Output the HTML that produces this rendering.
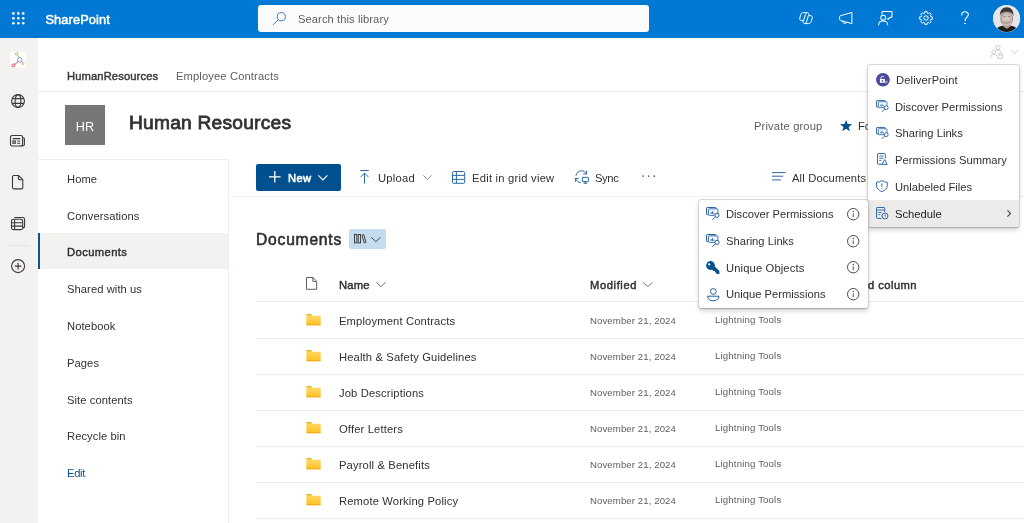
<!DOCTYPE html>
<html lang="en">
<head>
<meta charset="utf-8">
<title>Human Resources - Documents</title>
<style>
*{box-sizing:border-box;margin:0;padding:0}
html,body{width:1024px;height:523px;overflow:hidden;background:#fff}
body{font-family:"Liberation Sans",sans-serif;font-size:11.2px;color:#323130;position:relative}
.abs{position:absolute}
.t{position:absolute;white-space:nowrap;line-height:16px;height:16px;will-change:transform}
.sb{font-weight:400;-webkit-text-stroke:.04em currentColor;letter-spacing:.12px}
svg{position:absolute;overflow:visible}
#top{left:0;top:0;width:1024px;height:37.8px;background:#0078d4}
#rail{left:0;top:37.8px;width:38.3px;height:486px;background:#f3f2f1}
#search{left:257.5px;top:5.1px;width:391.2px;height:26.5px;background:#fbfbfc;border-radius:3px}
#nav{left:38px;top:159px;width:190.5px;height:365px;border-top:1px solid #f0efee;border-right:1px solid #f0efee;background:#fff}
.nv{left:67px;color:#323130;letter-spacing:.07px}
.hl{position:absolute;background:#eeedec;height:1px}
.menu{position:absolute;background:#fff;border-radius:2px;box-shadow:0 0 0 .7px rgba(0,0,0,.15),0 2.4px 5.5px rgba(0,0,0,.17),0 .5px 1.5px rgba(0,0,0,.15)}
.row{left:339px;letter-spacing:.15px}
.dt{left:590px;font-size:9.6px;color:#605e5c;letter-spacing:.1px}
.lt{left:715px;font-size:9.6px;color:#605e5c;letter-spacing:.17px}
</style>
</head>
<body>
<!-- top bar -->
<div id="top" class="abs"></div>
<svg style="left:11.6px;top:11.5px" width="12.6" height="12.6" viewBox="0.1 0.1 13.6 13.6" fill="#fff"><circle cx="1.6" cy="1.6" r="1.4"/><circle cx="6.9" cy="1.6" r="1.4"/><circle cx="12.2" cy="1.6" r="1.4"/><circle cx="1.6" cy="6.9" r="1.4"/><circle cx="6.9" cy="6.9" r="1.4"/><circle cx="12.2" cy="6.9" r="1.4"/><circle cx="1.6" cy="12.2" r="1.4"/><circle cx="6.9" cy="12.2" r="1.4"/><circle cx="12.2" cy="12.2" r="1.4"/></svg>
<div class="t sb" style="left:45px;top:11px;transform:translate(.4px,.5px);font-size:12.8px;color:#fff">SharePoint</div>
<div id="search" class="abs"></div>
<svg style="left:272px;top:11px" width="15" height="15" viewBox="0 0 15 15" fill="none" stroke="#2f6db3" stroke-width=".9"><circle cx="9.3" cy="5.7" r="4.1"/><path d="M6.4 8.6 L0.9 14"/></svg>
<div class="t" style="left:298px;top:11px;color:#605e5c;letter-spacing:.07px">Search this library</div>


<!-- top right icons -->
<svg style="left:798.6px;top:12.2px" width="14" height="12.2" viewBox="0 0 14 12.2" fill="none" stroke="#fff" stroke-width="1" stroke-linejoin="round"><path d="M5 .6 H8.2 C9.2 .6 9.6 1.2 9.9 2.2 L10.3 3.6 H11.4 C13 3.6 13.6 4.8 13.2 6.2 L12.2 9.6 C11.8 10.9 11 11.6 9.8 11.6 H5.8 C4.8 11.6 4.4 11 4.1 10 L3.7 8.6 H2.6 C1 8.6 .4 7.4 .8 6 L1.8 2.6 C2.2 1.3 3 .6 5 .6 Z"/><path d="M8 .8 C7 1 6.6 1.8 6.3 2.8 L4.6 8.6 H3.7 M6 11.4 C7 11.2 7.4 10.4 7.7 9.4 L9.4 3.6 H10.3"/></svg>
<svg style="left:838.8px;top:11.8px" width="14" height="12.4" viewBox="0 0 14 12.4" fill="none" stroke="#fff" stroke-width="1" stroke-linejoin="round" stroke-linecap="round"><path d="M12.9 .8 V11.6 L1.8 8.6 C1 8.4 .6 7.9 .6 7.1 V5.1 C.6 4.3 1 3.8 1.8 3.6 Z"/><path d="M3.8 9.2 C3.8 10.6 4.6 11.4 5.8 11.4 C7 11.4 7.6 10.8 7.8 10.4"/></svg>
<svg style="left:878.4px;top:10.8px" width="14.6" height="14.4" viewBox="0 0 14.6 14.4" fill="none" stroke="#fff" stroke-width="1.05" stroke-linejoin="round" stroke-linecap="round"><path d="M4 3 V1.3 C4 .8 4.3 .6 4.8 .6 H13.2 C13.7 .6 14 .9 14 1.4 V5.6 C14 6.1 13.7 6.4 13.2 6.4 H12 L10 8.4 V7.2"/><circle cx="5.2" cy="6.7" r="2.4"/><path d="M.7 13.8 C.7 11.4 2.6 10 5.2 10 C7.8 10 9.7 11.4 9.7 13.8"/></svg>
<svg style="left:918.7px;top:11.3px" width="14" height="14" viewBox="0 0 14 14" fill="none" stroke="#fff" stroke-width="1" stroke-linejoin="round"><circle cx="7" cy="7" r="2.2"/><path d="M5.71 2.17 L5.90 0.59 L8.10 0.59 L8.29 2.17 L9.51 2.67 L10.75 1.69 L12.31 3.25 L11.33 4.49 L11.83 5.71 L13.41 5.90 L13.41 8.10 L11.83 8.29 L11.33 9.51 L12.31 10.75 L10.75 12.31 L9.51 11.33 L8.29 11.83 L8.10 13.41 L5.90 13.41 L5.71 11.83 L4.49 11.33 L3.25 12.31 L1.69 10.75 L2.67 9.51 L2.17 8.29 L0.59 8.10 L0.59 5.90 L2.17 5.71 L2.67 4.49 L1.69 3.25 L3.25 1.69 L4.49 2.67 Z"/></svg>
<svg style="left:961.4px;top:11.4px" width="8" height="14" viewBox="0 0 8 14" fill="none" stroke="#fff" stroke-width="1.1" stroke-linecap="round"><path d="M.7 4 C.7 1.8 2.2 .7 4 .7 C5.8 .7 7.3 1.8 7.3 3.8 C7.3 6.4 4 6.6 4 9.8"/><circle cx="4" cy="12.6" r=".5" fill="#fff" stroke-width=".6"/></svg>
<!-- avatar -->
<svg style="left:992.6px;top:4.6px" width="27.2" height="27.2" viewBox="0 0 27.2 27.2"><defs><clipPath id="av"><circle cx="13.6" cy="13.6" r="13.4"/></clipPath><filter id="bl" x="-20%" y="-20%" width="140%" height="140%"><feGaussianBlur stdDeviation=".55"/></filter></defs><circle cx="13.6" cy="13.6" r="13.6" fill="#d9ecfa"/><g clip-path="url(#av)"><rect width="27.2" height="27.2" fill="#e6e6ea"/><g filter="url(#bl)"><path d="M1.5 27.2 C2.5 23 6 21.6 9.6 20.8 L13.8 23.4 L18 20.8 C21.6 21.6 25 23 26 27.2 Z" fill="#1b1b1f"/><path d="M10 18 H17.6 V21.2 L13.8 23.8 L10 21.2 Z" fill="#a89890"/><ellipse cx="13.7" cy="13.4" rx="6.5" ry="8" fill="#a89790"/><ellipse cx="13.8" cy="14.4" rx="5.3" ry="6.8" fill="#c9b9b1"/><ellipse cx="13" cy="13" rx="3.6" ry="3" fill="#d6cac3"/><path d="M10.4 11.6 H12.6 M14.8 11.6 H17" stroke="#6b5d58" stroke-width=".7"/><path d="M7 11.4 C6.4 5 9.8 2.2 13.8 2.2 C17.8 2.2 21 5 20.4 11.4 C19.8 8.4 18.6 6.8 13.8 6.8 C9 6.8 7.6 8.4 7 11.4 Z" fill="#3a3838"/><path d="M9.6 16.6 C11 18.6 16 18.6 17.4 16.6" stroke="#8a7a74" stroke-width=".8" fill="none"/></g></g></svg>
<!-- people lock + chevron -->
<svg style="left:990px;top:44.8px" width="13.4" height="14" viewBox="0 0 13.4 14" fill="none" stroke="#c8c6c4" stroke-width=".9"><circle cx="8" cy="2.6" r="2.1"/><circle cx="3.8" cy="7" r="2"/><path d="M.5 13 C.5 10.6 1.8 9.6 3.8 9.6 C5.4 9.6 6.4 10.2 6.8 11.2 M5.6 5.6 C6.2 5.2 7 5 8 5 C9.8 5 10.8 6 11 7.4"/><rect x="8" y="9.8" width="4.8" height="3.7" rx=".5"/><path d="M9.2 9.8 V8.8 A1.2 1.2 0 0 1 11.6 8.8 V9.8"/></svg>
<svg style="left:1011px;top:50px" width="7.4" height="4.2" viewBox="0 0 7.4 4.2" fill="none" stroke="#c8c6c4" stroke-width=".9"><path d="M.3 .3 L3.7 3.7 L7.1 .3"/></svg>

<!-- rail -->
<div id="rail" class="abs"></div>
<!-- logo -->
<div class="abs" style="left:9.6px;top:52px;width:16.4px;height:16.4px;background:#fdfdfc"></div>
<svg style="left:9.6px;top:52px" width="16.4" height="16.4" viewBox="0 0 16.4 16.4" fill="none" stroke-width="0.9"><path d="M4.6 12.6 L8 9.6" stroke="#d8315b"/><path d="M7.6 3.2 L9.4 6.2" stroke="#9bc46a"/><circle cx="3.4" cy="13.4" r="1.5" stroke="#d8315b"/><circle cx="9.8" cy="7.8" r="2.3" stroke="#7b8fd6"/><ellipse cx="6.6" cy="1.9" rx="1.5" ry="1.1" stroke="#9bc46a"/><circle cx="13" cy="11.6" r="1" stroke="#e0b84a"/><path d="M11.4 9.6 L12.4 10.8" stroke="#7b8fd6"/></svg>
<!-- globe -->
<svg style="left:11px;top:93.8px" width="14" height="14" viewBox="0 0 14 14" fill="none" stroke="#3b3a39" stroke-width="1.1"><circle cx="7" cy="7" r="6.4"/><ellipse cx="7" cy="7" rx="2.9" ry="6.4"/><path d="M1.3 4.6 H12.7 M1.3 9.4 H12.7"/></svg>
<!-- news -->
<svg style="left:10.4px;top:135.4px" width="15" height="11.6" viewBox="0 0 15 11.6" fill="none" stroke="#3b3a39" stroke-width="1.1"><path d="M2.2 .5 H11 A1.6 1.6 0 0 1 12.6 2.1 V9.2 A1.8 1.8 0 0 1 10.8 11 H2.2 A1.7 1.7 0 0 1 .5 9.3 V2.2 A1.7 1.7 0 0 1 2.2 .5 Z"/><path d="M12.6 2.8 H13.2 A1.2 1.2 0 0 1 14.4 4 V9.2 A1.8 1.8 0 0 1 12.6 11 H10.6"/><path d="M2.8 3.6 H10.2 M7.2 6 H10.2 M7.2 8.2 H10.2"/><rect x="2.9" y="5.9" width="2.4" height="2.4"/></svg>
<!-- doc -->
<svg style="left:12.4px;top:175.4px" width="11.4" height="14.4" viewBox="0 0 11.4 14.4" fill="none" stroke="#3b3a39" stroke-width="1.1"><path d="M2 .5 H6.6 L10.8 4.7 V12.4 A1.5 1.5 0 0 1 9.3 13.9 H2 A1.5 1.5 0 0 1 .5 12.4 V2 A1.5 1.5 0 0 1 2 .5 Z"/><path d="M6.4 .7 V3.6 A1.2 1.2 0 0 0 7.6 4.8 H10.6"/></svg>
<!-- list -->
<svg style="left:10.9px;top:217.2px" width="14.2" height="13.2" viewBox="0 0 14.2 13.2" fill="none" stroke="#3b3a39" stroke-width="1.1"><path d="M3.4 .5 H11.6 A2 2 0 0 1 13.6 2.5 V9 A2 2 0 0 1 11.6 11 "/><rect x=".5" y="2.2" width="11.2" height="10.4" rx="1.8"/><path d="M.6 5.7 H11.6 M.6 9.1 H11.6 M3.6 2.4 V12.4"/></svg>
<div class="abs" style="left:8px;top:245.4px;width:22px;height:1px;background:#e6e4e2"></div>
<!-- plus -->
<svg style="left:11.2px;top:258.9px" width="14.2" height="14.2" viewBox="0 0 14.2 14.2" fill="none" stroke="#3b3a39" stroke-width="1.1"><circle cx="7.1" cy="7.1" r="6.5"/><path d="M7.1 3.8 V10.4 M3.8 7.1 H10.4"/></svg>

<!-- breadcrumb -->
<div class="t sb" style="left:67px;top:67.5px;color:#3b3a39">HumanResources</div>
<div class="t" style="left:175.5px;top:67.5px;color:#605e5c;letter-spacing:.12px">Employee Contracts</div>
<div class="hl" style="left:38px;top:91px;width:986px"></div>

<!-- site header -->
<div class="abs" style="left:65px;top:105.2px;width:40px;height:39.8px;background:#777"></div>
<div class="t" style="left:65px;top:118px;width:40px;text-align:center;color:#fff;font-size:12.7px;transform:translateY(.9px)">HR</div>
<div class="t sb" style="left:129.2px;top:111px;font-size:19.2px;line-height:24px;height:24px;letter-spacing:.22px;transform:translateY(.35px)">Human Resources</div>
<div class="t" style="left:754px;top:117.6px;color:#605e5c;letter-spacing:.15px">Private group</div>
<div class="t" style="left:858px;top:117.6px">Fo</div>

<!-- nav -->
<div id="nav" class="abs"></div>
<div class="abs" style="left:38px;top:233.3px;width:190px;height:36.2px;background:#f3f2f1"></div>
<div class="abs" style="left:38px;top:233.3px;width:2px;height:36.2px;background:#0f548c"></div>
<div class="t nv" style="top:170.8px">Home</div>
<div class="t nv" style="top:207.6px">Conversations</div>
<div class="t nv sb" style="top:244.4px;letter-spacing:.42px">Documents</div>
<div class="t nv" style="top:281.2px">Shared with us</div>
<div class="t nv" style="top:318px">Notebook</div>
<div class="t nv" style="top:354.8px">Pages</div>
<div class="t nv" style="top:391.6px">Site contents</div>
<div class="t nv" style="top:428.4px">Recycle bin</div>
<div class="t nv" style="top:464.8px;color:#0f548c;letter-spacing:-.3px">Edit</div>

<!-- command bar -->
<div class="abs" style="left:255.5px;top:164px;width:85.6px;height:26.6px;background:#00508f;border-radius:2px"></div>
<div class="t sb" style="left:287.8px;top:170px;color:#fff;letter-spacing:.3px;-webkit-text-stroke:.05em #fff">New</div>
<div class="t" style="left:378px;top:170px;letter-spacing:.25px">Upload</div>
<div class="t" style="left:472px;top:170px;letter-spacing:.24px">Edit in grid view</div>
<div class="t" style="left:594.5px;top:170px;letter-spacing:-.35px">Sync</div>
<div class="t" style="left:792px;top:170px;letter-spacing:.16px">All Documents</div>
<div class="hl" style="left:230px;top:195.5px;width:794px;background:#f0efee"></div>


<!-- command icons -->
<svg style="left:268.8px;top:171.2px" width="11.6" height="11.6" viewBox="0 0 11.6 11.6" fill="none" stroke="#fff" stroke-width="1.3"><path d="M5.8 0 V11.6 M0 5.8 H11.6"/></svg>
<svg style="left:318.4px;top:174.6px" width="9.8" height="5.6" viewBox="0 0 9.8 5.6" fill="none" stroke="#fff" stroke-width="1.2"><path d="M.4 .4 L4.9 4.9 L9.4 .4"/></svg>
<svg style="left:359.6px;top:169.8px" width="9" height="13.6" viewBox="0 0 9 13.6" fill="none" stroke="#2b68a6" stroke-width="1"><path d="M.2 .5 H8.8 M4.5 13.6 V3.2 M.6 7 L4.5 3.1 L8.4 7"/></svg>
<svg style="left:422.8px;top:175px" width="9" height="5" viewBox="0 0 9 5" fill="none" stroke="#8a8886" stroke-width=".9"><path d="M.3 .3 L4.5 4.5 L8.7 .3"/></svg>
<svg style="left:452.2px;top:170.6px" width="13.2" height="12.8" viewBox="0 0 13.2 12.8" fill="none" stroke="#2b68a6" stroke-width="1"><rect x=".5" y=".5" width="12.2" height="11.8" rx="1.2"/><path d="M.5 4.4 H12.7 M.5 8.4 H12.7 M4.4 .5 V12.3"/></svg>
<svg style="left:574px;top:170.4px" width="15" height="13.8" viewBox="0 0 15 13.8" fill="none" stroke="#2b68a6" stroke-width="1" stroke-linecap="round" stroke-linejoin="round"><path d="M2 5.4 C2.6 2.6 4.8 .8 7.4 .8 C9.6 .8 11.4 2 12.4 3.8 M12.6 1 V4 H9.6"/><path d="M6.4 12.6 C4 12.2 2.2 10.6 1.6 8.6 M1.4 11.4 V8.4 H4.4"/><rect x="8.4" y="7.4" width="6" height="4.2" rx=".6"/><path d="M10 13.2 H12.8 M11.4 11.6 V13.2"/></svg>
<svg style="left:642px;top:175.4px" width="13.4" height="2.2" viewBox="0 0 13.4 2.2" fill="#605e5c"><circle cx="1.1" cy="1.1" r=".9"/><circle cx="6.7" cy="1.1" r=".9"/><circle cx="12.3" cy="1.1" r=".9"/></svg>
<svg style="left:771.8px;top:172.4px" width="13.6" height="8.6" viewBox="0 0 13.6 8.6" fill="none" stroke="#2b68a6" stroke-width="1"><path d="M0 .6 H13.6 M0 4.2 H11.2 M0 7.9 H8.8"/></svg>
<svg style="left:839.6px;top:119.8px" width="12.2" height="11.2" viewBox="0 0 12.2 11.2" fill="#03508f"><path d="M6.1 0 L7.7 4 L12.2 4.2 L8.7 6.9 L9.9 11.2 L6.1 8.7 L2.3 11.2 L3.5 6.9 L0 4.2 L4.5 4 Z"/></svg>

<!-- list title -->
<div class="t sb" style="left:256px;top:230.3px;font-size:15.6px;line-height:20px;height:20px;letter-spacing:.8px">Documents</div>
<div class="abs" style="left:349px;top:229px;width:37px;height:19.8px;background:#c5dcee;border-radius:2px"></div>

<svg style="left:354px;top:234.4px" width="12.4" height="9.4" viewBox="0 0 12.4 9.4" fill="none" stroke="#323130" stroke-width=".9"><rect x=".5" y=".5" width="2.3" height="8.4"/><rect x="4.2" y=".5" width="2.3" height="8.4"/><path d="M8 1.2 L9.8 .6 L12 8.2 L10.2 8.8 Z"/></svg>
<svg style="left:371px;top:236.6px" width="9.8" height="5.2" viewBox="0 0 9.8 5.2" fill="none" stroke="#323130" stroke-width=".9"><path d="M.3 .3 L4.9 4.7 L9.5 .3"/></svg>
<!-- header icons -->
<svg style="left:306.2px;top:277.3px" width="11.2" height="12.8" viewBox="0 0 11.2 12.8" fill="none" stroke="#605e5c" stroke-width="1"><path d="M.5 .5 H7 L10.7 4.2 V12.3 H.5 Z"/><path d="M6.8 .6 V4.4 H10.6"/></svg>
<svg style="left:376px;top:281.8px" width="9.8" height="5" viewBox="0 0 9.8 5" fill="none" stroke="#605e5c" stroke-width=".9"><path d="M.3 .3 L4.9 4.6 L9.5 .3"/></svg>
<svg style="left:643px;top:281.8px" width="9.8" height="5" viewBox="0 0 9.8 5" fill="none" stroke="#605e5c" stroke-width=".9"><path d="M.3 .3 L4.9 4.6 L9.5 .3"/></svg>
<svg width="0" height="0" style="left:0;top:0"><defs><linearGradient id="fg" x1="0" y1="0" x2="0" y2="1"><stop offset="0" stop-color="#ffd966"/><stop offset="1" stop-color="#ffc020"/></linearGradient><g id="fold"><path d="M.3 1 A.9 .9 0 0 1 1.2 .1 H5.2 L6.8 1.7 H.3 Z" fill="#e6b422"/><path d="M.3 1.7 H14.2 A.7 .7 0 0 1 14.9 2.4 V10.8 A.7 .7 0 0 1 14.2 11.5 H1 A.7 .7 0 0 1 .3 10.8 Z" fill="url(#fg)"/><path d="M.3 10.5 H14.9 V10.8 A.7 .7 0 0 1 14.2 11.5 H1 A.7 .7 0 0 1 .3 10.8 Z" fill="#eeac22"/></g></defs></svg>
<svg style="left:306.4px;top:314.3px" width="15" height="11.4" viewBox="0 0 15.2 11.6"><use href="#fold"/></svg>
<svg style="left:306.4px;top:350.3px" width="15" height="11.4" viewBox="0 0 15.2 11.6"><use href="#fold"/></svg>
<svg style="left:306.4px;top:386.3px" width="15" height="11.4" viewBox="0 0 15.2 11.6"><use href="#fold"/></svg>
<svg style="left:306.4px;top:422.3px" width="15" height="11.4" viewBox="0 0 15.2 11.6"><use href="#fold"/></svg>
<svg style="left:306.4px;top:458.3px" width="15" height="11.4" viewBox="0 0 15.2 11.6"><use href="#fold"/></svg>
<svg style="left:306.4px;top:494.3px" width="15" height="11.4" viewBox="0 0 15.2 11.6"><use href="#fold"/></svg>

<!-- table -->
<div class="t sb row" style="top:276.7px;letter-spacing:.25px">Name</div>
<div class="t sb" style="left:590px;top:276.7px;letter-spacing:.6px">Modified</div>
<div class="t sb" style="left:868px;top:276.7px;letter-spacing:.45px">d column</div>
<div class="hl" style="left:256px;top:301.3px;width:768px"></div>

<div class="t row" style="top:312.5px">Employment Contracts</div>
<div class="t dt" style="top:312.5px">November 21, 2024</div>
<div class="t lt" style="top:311.5px">Lightning Tools</div>
<div class="hl" style="left:256px;top:337.5px;width:768px"></div>

<div class="t row" style="top:348.5px">Health &amp; Safety Guidelines</div>
<div class="t dt" style="top:348.5px">November 21, 2024</div>
<div class="t lt" style="top:347.5px">Lightning Tools</div>
<div class="hl" style="left:256px;top:373.5px;width:768px"></div>

<div class="t row" style="top:384.5px">Job Descriptions</div>
<div class="t dt" style="top:384.5px">November 21, 2024</div>
<div class="t lt" style="top:383.5px">Lightning Tools</div>
<div class="hl" style="left:256px;top:409.5px;width:768px"></div>

<div class="t row" style="top:420.5px">Offer Letters</div>
<div class="t dt" style="top:420.5px">November 21, 2024</div>
<div class="t lt" style="top:419.5px">Lightning Tools</div>
<div class="hl" style="left:256px;top:445.5px;width:768px"></div>

<div class="t row" style="top:456.5px">Payroll &amp; Benefits</div>
<div class="t dt" style="top:456.5px">November 21, 2024</div>
<div class="t lt" style="top:455.5px">Lightning Tools</div>
<div class="hl" style="left:256px;top:481.5px;width:768px"></div>

<div class="t row" style="top:492.5px">Remote Working Policy</div>
<div class="t dt" style="top:492.5px">November 21, 2024</div>
<div class="t lt" style="top:491.5px">Lightning Tools</div>
<div class="hl" style="left:256px;top:517.5px;width:768px"></div>

<!-- main menu -->
<div class="menu" style="left:867.6px;top:64.8px;width:151.4px;height:162.2px"></div>
<div class="abs" style="left:867.5px;top:200.2px;width:151.5px;height:26.8px;background:#edebe9;border-radius:0 0 2px 2px"></div>
<div class="t" style="left:896px;top:71.7px;letter-spacing:.12px">DeliverPoint</div>
<div class="t" style="left:895.4px;top:98.5px">Discover Permissions</div>
<div class="t" style="left:895.4px;top:125.3px">Sharing Links</div>
<div class="t" style="left:895.4px;top:152px">Permissions Summary</div>
<div class="t" style="left:895.4px;top:178.8px">Unlabeled Files</div>
<div class="t" style="left:895.4px;top:205.5px;color:#201f1e">Schedule</div>

<!-- menu icons -->
<svg style="left:876px;top:72.6px" width="13.8" height="13.6" viewBox="0 0 13.8 13.8" preserveAspectRatio="none"><circle cx="6.9" cy="6.9" r="6.9" fill="#484b9c"/><rect x="3.9" y="6" width="5" height="4" rx=".6" fill="#fff"/><path d="M5 6 V4.7 A1.6 1.6 0 0 1 8.1 4.4" fill="none" stroke="#fff" stroke-width=".95"/><path d="M9.7 8.6 V10.4 M10.8 7.8 V10.4" stroke="#d8d9f0" stroke-width=".8"/><circle cx="6.4" cy="8" r=".8" fill="#484b9c"/></svg>
<svg style="left:875.9px;top:99.89999999999999px" width="12.3" height="12.3" viewBox="0 0 13.4 13.4" fill="none" stroke-width="1" stroke-linejoin="round"><rect x=".5" y=".5" width="9.6" height="7.2" rx=".8" stroke="#2c5f94" fill="#dfeaf6"/><rect x="2.6" y="1.9" width="9.4" height="6.5" rx=".8" stroke="#3b78b8" fill="#f6fafe"/><path d="M5.2 7 V5 M6.6 7 V4.2 M8 7 V5.6" stroke="#2c5f94" stroke-width=".9"/><circle cx="11.1" cy="8.4" r="2.1" fill="#fff" stroke="#2c5f94"/><path d="M9.6 9.9 L6.3 12.9" stroke="#2c5f94"/></svg>
<svg style="left:875.9px;top:126.69999999999999px" width="12.3" height="12.3" viewBox="0 0 13.4 13.4" fill="none" stroke-width="1" stroke-linejoin="round"><rect x=".5" y=".5" width="9.6" height="7.2" rx=".8" stroke="#2c5f94" fill="#dfeaf6"/><rect x="2.6" y="1.9" width="9.4" height="6.5" rx=".8" stroke="#3b78b8" fill="#f6fafe"/><path d="M5.2 7 V5 M6.6 7 V4.2 M8 7 V5.6" stroke="#2c5f94" stroke-width=".9"/><circle cx="11.1" cy="8.4" r="2.1" fill="#fff" stroke="#2c5f94"/><path d="M9.6 9.9 L6.3 12.9" stroke="#2c5f94"/></svg>
<svg style="left:877.4px;top:153.2px" width="10.6" height="12" viewBox="0 0 10.6 12" fill="none" stroke="#2b68a6" stroke-width="1" stroke-linejoin="round"><path d="M5 11.2 H1.2 A.7 .7 0 0 1 .5 10.5 V1.2 A.7 .7 0 0 1 1.2 .5 H7.6 A.7 .7 0 0 1 8.3 1.2 V5.4"/><path d="M2.2 3 H6.6 M2.2 5.2 H6.6 M2.2 7.4 H4.4" stroke-width=".9"/><path d="M7.6 6.6 L10.2 11.4 H5 Z"/></svg>
<svg style="left:875.8px;top:180.4px" width="11.8" height="12" viewBox="0 0 11.8 12" fill="none" stroke="#2b68a6" stroke-width="1" stroke-linejoin="round"><path d="M5.9 .5 C7.4 1.6 9.2 2.2 11.3 2.3 V5.4 C11.3 8.2 9.6 10.2 5.9 11.6 C2.2 10.2 .5 8.2 .5 5.4 V2.3 C2.6 2.2 4.4 1.6 5.9 .5 Z"/><path d="M5.9 3.4 V6.8 M5.9 8 V8.9" stroke-width="1"/></svg>
<svg style="left:875.8px;top:206.8px" width="12.6" height="12.6" viewBox="0 0 12.6 12.6" fill="none" stroke="#2b68a6" stroke-width="1" stroke-linejoin="round"><path d="M5.4 11.4 H1.2 A.7 .7 0 0 1 .5 10.7 V1.2 A.7 .7 0 0 1 1.2 .5 H8 A.7 .7 0 0 1 8.7 1.2 V5"/><path d="M.5 3 H8.7 M2.2 5.4 H5.6 M2.2 7.6 H4.4" stroke-width=".9"/><circle cx="9" cy="9" r="3"/><path d="M9 7.4 V9.1 H10.2" stroke-width=".8"/></svg>
<svg style="left:1007.2px;top:210px" width="4.2" height="7" viewBox="0 0 4.2 7" fill="none" stroke="#484644" stroke-width="1.1"><path d="M.4 .4 L3.6 3.5 L.4 6.6"/></svg>

<!-- sub menu -->
<div class="menu" style="left:699px;top:200px;width:169px;height:107.6px"></div>
<div class="t" style="left:726.3px;top:206px">Discover Permissions</div>
<div class="t" style="left:726.3px;top:232.8px">Sharing Links</div>
<div class="t" style="left:726.3px;top:259.6px;letter-spacing:.14px">Unique Objects</div>
<div class="t" style="left:726.3px;top:286.4px">Unique Permissions</div>
<!-- submenu icons -->
<svg style="left:705.8px;top:207.0px" width="13.3" height="13.3" viewBox="0 0 13.4 13.4" fill="none" stroke-width="1" stroke-linejoin="round"><rect x=".5" y=".5" width="9.6" height="7.2" rx=".8" stroke="#2c5f94" fill="#dfeaf6"/><rect x="2.6" y="1.9" width="9.4" height="6.5" rx=".8" stroke="#3b78b8" fill="#f6fafe"/><path d="M5.2 7 V5 M6.6 7 V4.2 M8 7 V5.6" stroke="#2c5f94" stroke-width=".9"/><circle cx="11.1" cy="8.4" r="2.1" fill="#fff" stroke="#2c5f94"/><path d="M9.6 9.9 L6.3 12.9" stroke="#2c5f94"/></svg>
<svg style="left:705.8px;top:233.8px" width="13.3" height="13.3" viewBox="0 0 13.4 13.4" fill="none" stroke-width="1" stroke-linejoin="round"><rect x=".5" y=".5" width="9.6" height="7.2" rx=".8" stroke="#2c5f94" fill="#dfeaf6"/><rect x="2.6" y="1.9" width="9.4" height="6.5" rx=".8" stroke="#3b78b8" fill="#f6fafe"/><path d="M5.2 7 V5 M6.6 7 V4.2 M8 7 V5.6" stroke="#2c5f94" stroke-width=".9"/><circle cx="11.1" cy="8.4" r="2.1" fill="#fff" stroke="#2c5f94"/><path d="M9.6 9.9 L6.3 12.9" stroke="#2c5f94"/></svg>
<svg style="left:706.1px;top:261.2px" width="13.6" height="13.2" viewBox="0 0 13.6 13.2"><circle cx="4.5" cy="4.5" r="4.4" fill="#03508f"/><path d="M5.6 8.2 L8.6 5.2 L13.4 10 V13 H10.4 V11.4 H9 V10 H7.4 Z" fill="#03508f"/><circle cx="3.2" cy="3.3" r="1.15" fill="#fff"/></svg>
<svg style="left:706.5px;top:287.6px" width="12.6" height="13.4" viewBox="0 0 12.6 13.4" fill="none" stroke="#245c96" stroke-width="1"><circle cx="6.3" cy="3.5" r="2.9"/><path d="M.6 8.2 H12 C12 10.9 9.8 12.8 6.3 12.8 C2.8 12.8 .6 10.9 .6 8.2 Z" stroke-linejoin="round"/></svg>
<svg style="left:847px;top:207.8px" width="12.4" height="12.4" viewBox="0 0 12.4 12.4" fill="none" stroke="#3b3a39" stroke-width=".9"><circle cx="6.2" cy="6.2" r="5.7"/><path d="M6.2 5.4 V9.2"/><circle cx="6.2" cy="3.6" r=".35" fill="#3b3a39"/></svg>
<svg style="left:847px;top:234.6px" width="12.4" height="12.4" viewBox="0 0 12.4 12.4" fill="none" stroke="#3b3a39" stroke-width=".9"><circle cx="6.2" cy="6.2" r="5.7"/><path d="M6.2 5.4 V9.2"/><circle cx="6.2" cy="3.6" r=".35" fill="#3b3a39"/></svg>
<svg style="left:847px;top:261.4px" width="12.4" height="12.4" viewBox="0 0 12.4 12.4" fill="none" stroke="#3b3a39" stroke-width=".9"><circle cx="6.2" cy="6.2" r="5.7"/><path d="M6.2 5.4 V9.2"/><circle cx="6.2" cy="3.6" r=".35" fill="#3b3a39"/></svg>
<svg style="left:847px;top:288.2px" width="12.4" height="12.4" viewBox="0 0 12.4 12.4" fill="none" stroke="#3b3a39" stroke-width=".9"><circle cx="6.2" cy="6.2" r="5.7"/><path d="M6.2 5.4 V9.2"/><circle cx="6.2" cy="3.6" r=".35" fill="#3b3a39"/></svg>
</body>
</html>
